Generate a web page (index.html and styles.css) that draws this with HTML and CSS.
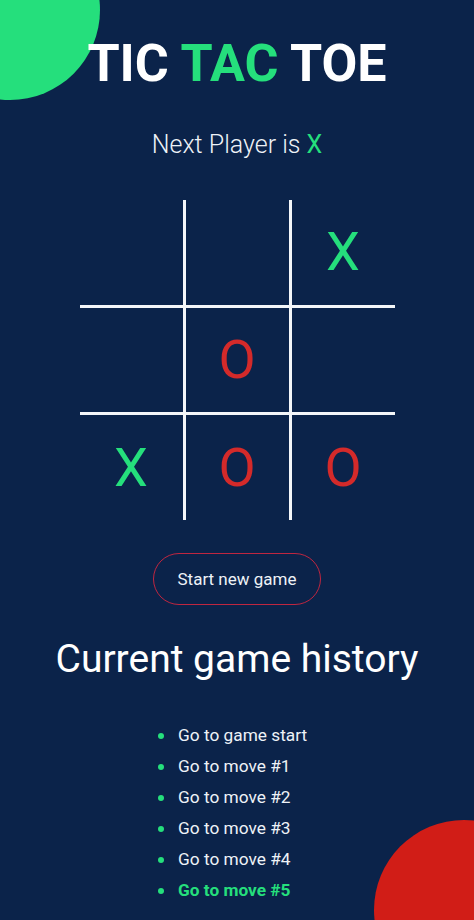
FILE: index.html
```html
<!DOCTYPE html>
<html>
<head>
<meta charset="utf-8">
<link rel="stylesheet" href="styles.css">
</head>
<body>
<div class="blob blob-green"></div>
<div class="blob blob-red"></div>
<main class="app">
  <h1 class="title">TIC <span class="accent">TAC</span> TOE</h1>
  <p class="status">Next Player is <span class="accent next">X</span></p>
  <div class="board">
    <div class="cell"></div>
    <div class="cell"></div>
    <div class="cell x">X</div>
    <div class="cell"></div>
    <div class="cell o">O</div>
    <div class="cell"></div>
    <div class="cell x">X</div>
    <div class="cell o">O</div>
    <div class="cell o">O</div>
  </div>
  <button class="restart">Start new game</button>
  <h2 class="history-title">Current game history</h2>
  <ul class="history">
    <li>Go to game start</li>
    <li>Go to move #1</li>
    <li>Go to move #2</li>
    <li>Go to move #3</li>
    <li>Go to move #4</li>
    <li class="current">Go to move #5</li>
  </ul>
</main>
</body>
</html>
```
FILE: styles.css
```css
html, body {
  margin: 0;
  padding: 0;
}
body {
  width: 474px;
  height: 920px;
  overflow: hidden;
  position: relative;
  background: #0b234a;
  font-family: Roboto, "Liberation Sans", sans-serif;
  color: #ffffff;
}
.blob {
  position: absolute;
  width: 180px;
  height: 180px;
  border-radius: 50%;
  z-index: 0;
}
.blob-green {
  left: -80px;
  top: -80px;
  background: #25df7c;
}
.blob-red {
  right: -80px;
  bottom: -80px;
  background: #d11d17;
}
.app {
  position: relative;
  z-index: 1;
  display: flex;
  flex-direction: column;
  align-items: center;
  padding-top: 38px;
}
.accent {
  color: #25df7c;
}
.title {
  margin: 0;
  font-size: 52px;
  line-height: 52px;
  font-weight: 700;
  letter-spacing: 0;
}
.status {
  margin: 42px 0 0;
  font-size: 25px;
  line-height: 26px;
  font-weight: 300;
  color: #eef2f7;
}
.status .next {
  font-weight: 400;
}
.board {
  margin-top: 42px;
  width: 315px;
  height: 320px;
  display: grid;
  grid-template-columns: repeat(3, 1fr);
  grid-template-rows: repeat(3, 1fr);
  gap: 3px;
  background: #f4f6f9;
}
.cell {
  background: #0b234a;
  display: flex;
  align-items: center;
  justify-content: center;
  font-size: 54px;
  line-height: 1;
  font-weight: 400;
}
.cell.x {
  color: #25df7c;
}
.cell.o {
  color: #d42a2a;
}
.restart {
  margin-top: 33px;
  width: 168px;
  height: 52px;
  border: 1.5px solid #bf2640;
  border-radius: 26px;
  background: transparent;
  color: #eef2f7;
  font-family: Roboto, "Liberation Sans", sans-serif;
  font-size: 17px;
  padding: 0;
}
.history-title {
  margin: 35px 0 0;
  font-size: 39px;
  line-height: 39px;
  font-weight: 400;
  color: #ffffff;
}
.history {
  align-self: flex-start;
  margin: 41px 0 0 158px;
  padding: 0;
  list-style: none;
}
.history li {
  display: flex;
  align-items: center;
  font-size: 17.3px;
  line-height: 31px;
  color: #eef2f7;
}
.history li::before {
  content: "";
  width: 6px;
  height: 6px;
  border-radius: 50%;
  background: #25df7c;
  margin-right: 14px;
}
.history li.current {
  color: #25df7c;
  font-weight: 700;
}
```
